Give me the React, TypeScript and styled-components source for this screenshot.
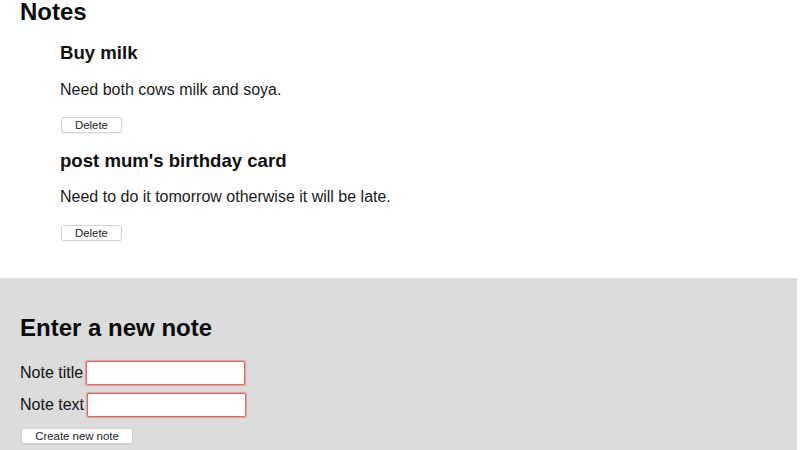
import React from 'react';
import styled, { createGlobalStyle } from 'styled-components';

const GlobalStyle = createGlobalStyle`
  html, body {
    margin: 0;
    padding: 0;
    background: #ffffff;
  }
  body {
    font-family: 'Liberation Sans', Arial, Helvetica, sans-serif;
    color: #111111;
  }
`;

const Page = styled.div`
  width: 800px;
  height: 450px;
  overflow: hidden;
  display: flex;
  flex-direction: column;
`;

const NotesSection = styled.section`
  padding: 0 20px;
  height: 278px;
  box-sizing: border-box;
`;

const PageTitle = styled.h2`
  font-size: 24px;
  font-weight: bold;
  line-height: 24px;
  margin: 0;
  color: #0a0a0a;
`;

const NoteList = styled.ul`
  list-style: none;
  margin: 0;
  padding: 0 0 0 40px;
`;

const NoteItem = styled.li`
  padding-top: 18px;

  & + & {
    padding-top: 17px;
  }
`;

const NoteTitle = styled.h3`
  font-size: 18.6px;
  font-weight: bold;
  line-height: 21.5px;
  margin: 0 0 17px;
  color: #111111;
`;

const NoteText = styled.p`
  font-size: 16px;
  line-height: 18.4px;
  margin: 0 0 18px;
  color: #1a1a1a;
`;

const SmallButton = styled.button<{ $width: number }>`
  display: block;
  width: ${(p) => p.$width}px;
  height: 16px;
  padding: 0;
  margin: 0;
  font-family: 'Liberation Sans', Arial, Helvetica, sans-serif;
  font-size: 11.4px;
  line-height: 14px;
  color: #1c1c1c;
  background: #ffffff;
  border: 1px solid #d2d2d2;
  border-radius: 3px;
  box-shadow: 0 1px 1px rgba(0, 0, 0, 0.06);
`;

const FormSection = styled.section`
  flex: 1;
  background: #dcdcdc;
  margin-right: 3px;
  padding: 36px 20px 0;
`;

const FormTitle = styled.h2`
  font-size: 24px;
  font-weight: bold;
  line-height: 27.6px;
  margin: 0 0 19px;
  color: #0a0a0a;
`;

const Field = styled.div`
  display: flex;
  align-items: center;
  gap: 3px;
  height: 24px;
  margin-bottom: 8px;
`;

const Label = styled.label`
  font-size: 16px;
  line-height: 18px;
  color: #111111;
`;

const TextInput = styled.input`
  box-sizing: border-box;
  width: 159px;
  height: 24px;
  margin: 0;
  padding: 2px 4px;
  background: #ffffff;
  border: 1px solid #d96a6a;
  border-radius: 2px;
  box-shadow: 0 0 0 1px rgba(235, 130, 130, 0.55), 0 0 2px 1px rgba(235, 140, 140, 0.35);
  outline: none;
`;

const SubmitRow = styled.div`
  padding-top: 3px;
  padding-left: 1px;
`;

type Note = { id: number; title: string; text: string };

const notes: Note[] = [
  { id: 1, title: 'Buy milk', text: 'Need both cows milk and soya.' },
  { id: 2, title: "post mum's birthday card", text: 'Need to do it tomorrow otherwise it will be late.' },
];

const App: React.FC = () => {
  return (
    <Page>
      <GlobalStyle />
      <NotesSection>
        <PageTitle>Notes</PageTitle>
        <NoteList>
          {notes.map((note) => (
            <NoteItem key={note.id}>
              <NoteTitle>{note.title}</NoteTitle>
              <NoteText>{note.text}</NoteText>
              <SmallButton $width={61} style={{ marginLeft: 1 }}>Delete</SmallButton>
            </NoteItem>
          ))}
        </NoteList>
      </NotesSection>

      <FormSection>
        <FormTitle>Enter a new note</FormTitle>
        <Field>
          <Label htmlFor="note-title">Note title</Label>
          <TextInput id="note-title" type="text" />
        </Field>
        <Field>
          <Label htmlFor="note-text">Note text</Label>
          <TextInput id="note-text" type="text" />
        </Field>
        <SubmitRow>
          <SmallButton $width={112}>Create new note</SmallButton>
        </SubmitRow>
      </FormSection>
    </Page>
  );
};

export default App;
